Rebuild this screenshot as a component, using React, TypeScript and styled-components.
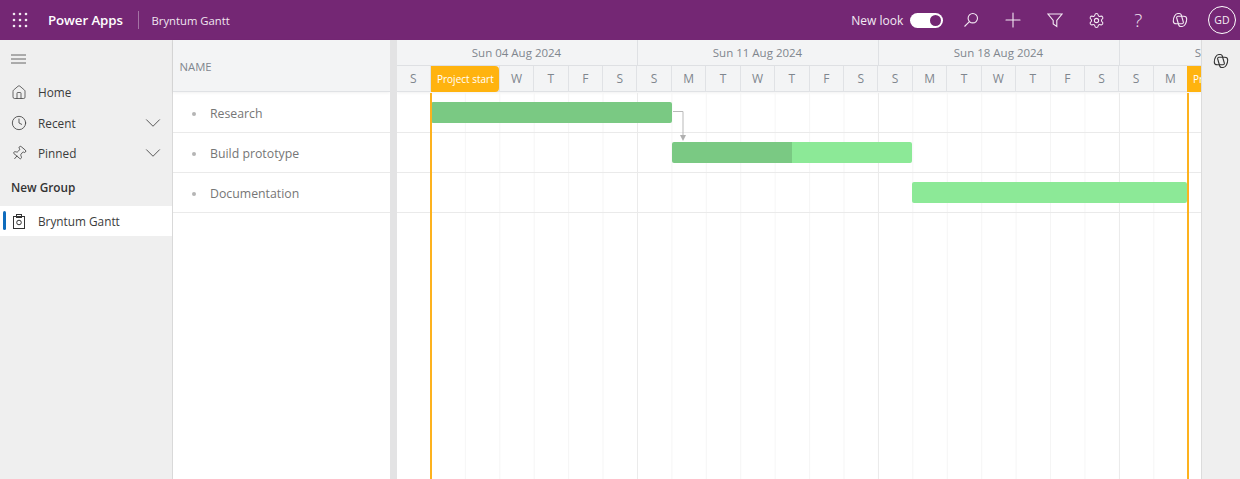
import React from "react";
import styled, { createGlobalStyle } from "styled-components";
import { Home, Clock, Pin, ChevronDown, Plus, Settings } from "lucide-react";

const Global = createGlobalStyle`
  html, body { margin: 0; padding: 0; height: 100%; background: #fff; overflow: hidden; }
  body { font-family: "Open Sans", "Noto Sans", sans-serif; }
  #root { height: 100%; }
`;

const DAY = 241 / 7;
const Page = styled.div`
  width: 1240px; height: 479px; display: flex; flex-direction: column; overflow: hidden;
`;
const TopBar = styled.header`
  height: 40px; flex: none; background: #742774; color: #fff; display: flex; align-items: center;
`;
const Waffle = styled.svg`
  width: 16px; height: 16px; margin-left: 12px; flex: none;
`;
const AppName = styled.span`
  margin-left: 20px; font-size: 13.3px; font-weight: 600; width: 89.500px; letter-spacing: -0.1px;
`;
const Divider = styled.span`
  width: 1px; height: 18px; background: rgba(255,255,255,.35);
`;
const EnvName = styled.span`
  margin-left: 13px; font-size: 11.300px; color: #f0e6f0;
`;
const TopRight = styled.div`
  margin-left: auto; display: flex; align-items: center; height: 100%;
`;
const LookLabel = styled.span`
  font-size: 12px; color: #f3eaf3; margin-right: 7px;
`;
const Toggle = styled.span`
  width: 33px; height: 15px; border-radius: 8px; background: #fff; display: flex; align-items: center;
  justify-content: flex-end; padding-right: 2px; box-sizing: border-box; margin-right: 7px;
`;
const Knob = styled.span`
  width: 11px; height: 11px; border-radius: 50%; background: #742774;
`;
const TopIcon = styled.span`
  width: 41.800px; height: 40px; display: flex; align-items: center; justify-content: center; flex: none;
`;
const Help = styled.span`
  font-size: 19px; font-weight: 300; color: #efe3ef; line-height: 1;
`;
const Avatar = styled.span`
  width: 26px; height: 26px; border: 1px solid #fff; border-radius: 50%; display: flex; align-items: center;
  justify-content: center; font-size: 10.500px; margin: 0 4px 0 7px; color: #f6eef6;
`;
const Main = styled.div`
  flex: 1; display: flex; min-height: 0;
`;
const Side = styled.nav`
  width: 172px; flex: none; background: #efefef; border-right: 1px solid #d9d9d9; padding-top: 9px; color: #333;
`;
const Burger = styled.div`
  height: 20px; padding-left: 11px; margin-bottom: 8px; display: flex; align-items: center; color: #666;
`;
const NavItem = styled.div`
  height: 30.500px; display: flex; align-items: center; padding-left: 11px; font-size: 11.800px; gap: 11px; color: #3b3b3b;
`;
const NavIcon = styled.span`
  width: 16px; height: 16px; display: flex; align-items: center; justify-content: center; color: #444; flex: none;
`;
const Chev = styled.span`
  margin-left: auto; margin-right: 6px; display: flex; color: #555;
`;
const GroupTitle = styled.div`
  font-size: 11.800px; font-weight: 600; color: #333; padding: 10.500px 0 0 11px; height: 27px;
`;
const ActiveItem = styled(NavItem)`
  background: #fff; height: 30px; position: relative; padding-left: 11px;
  &::before { content: ""; position: absolute; left: 3px; top: 5px; width: 3px; height: 19px; background: #0f6cbd; border-radius: 2px; }
`;
const Gantt = styled.section`
  flex: 1; display: flex; min-width: 0;
`;
const Locked = styled.div`
  width: 217px; flex: none; display: flex; flex-direction: column;
`;
const NameHead = styled.div`
  height: 52px; box-sizing: border-box; background: #f3f4f5; border-bottom: 1px solid #e0e2e5; display: flex; align-items: center;
  padding: 1px 0 0 6.500px; font-size: 11.300px; color: #7f868e; margin-bottom: 1px; box-shadow: 0 1px 3px rgba(0,0,0,.06);
`;
const TaskRow = styled.div`
  height: 40px; box-sizing: border-box; border-bottom: 1px solid #eaeaea; display: flex; align-items: center;
  padding: 2px 0 0 19px; font-size: 12.300px; color: #767676; gap: 14px;
`;
const Dot = styled.span`
  width: 4px; height: 4px; border-radius: 50%; background: #b5b5b5; flex: none;
`;
const Splitter = styled.div`
  width: 6.500px; flex: none; background: #e3e3e4;
`;
const Timeline = styled.div`
  width: 804.500px; flex: none; display: flex; flex-direction: column; position: relative; overflow: hidden;
`;
const HeadRow = styled.div`
  display: flex; flex: none; background: #f3f4f5; height: 26px; box-sizing: border-box; border-bottom: 1px solid #e0e2e5;
`;
const WeekCell = styled.div`
  width: ${DAY * 7}px; flex: none; box-sizing: border-box; border-right: 1px solid #dfe1e4; font-size: 11.500px; color: #7f868e;
  display: flex; align-items: center; justify-content: center; white-space: nowrap;
`;
const DayRow = styled(HeadRow)`
  box-shadow: 0 1px 3px rgba(0,0,0,.06); position: relative;
`;
const DayCell = styled.div`
  width: ${DAY}px; flex: none; box-sizing: border-box; border-right: 1px solid #e0e2e5; font-size: 12px; color: #7f868e;
  display: flex; align-items: center; justify-content: center;
`;
const Body = styled.div`
  flex: 1; position: relative; margin-top: 1px;
  background-image:
    linear-gradient(to right, transparent ${DAY * 7 - 1}px, #ebebeb ${DAY * 7 - 1}px),
    linear-gradient(to right, transparent ${DAY - 1}px, #f5f5f5 ${DAY - 1}px);
  background-size: ${DAY * 7}px 100%, ${DAY}px 100%;
`;
const TimeRow = styled.div`
  height: 40px; box-sizing: border-box; border-bottom: 1px solid #eaeaea; position: relative; display: flex; align-items: center;
`;
const Bar = styled.div<{ $left: number; $width: number; $done: number }>`
  position: absolute; left: ${p => p.$left}px; width: ${p => p.$width}px; top: 9px; height: 21px; border-radius: 2px;
  background: linear-gradient(to right, #7ac983 ${p => p.$done}%, #8ce997 ${p => p.$done}%);
`;
const Line = styled.div<{ $left: number }>`
  position: absolute; left: ${p => p.$left}px; top: 0; bottom: 0; width: 2px; background: #fdb21e; z-index: 2;
`;
const Marker = styled.div<{ $left: number }>`
  position: absolute; left: ${p => p.$left}px; top: 26px; height: 26px; width: 68px; background: #ffb30f; color: #fff; z-index: 3;
  border-radius: 0 4px 4px 0; font-size: 10px; display: flex; align-items: center; padding-left: 6px; box-sizing: border-box; white-space: nowrap;
`;
const Arrow = styled.svg`
  position: absolute; left: 275px; top: 18px; z-index: 1;
`;
const Rail = styled.aside`
  flex: 1; background: #efefef; border-left: 1px solid #dcdcdc; display: flex; justify-content: center; padding-top: 13px; box-sizing: border-box;
`;

const Copilot = ({ color, size = 16 }: { color: string; size?: number }) => (
  <svg width={size} height={size} viewBox="0 0 16 16" fill="none" stroke={color} strokeWidth="1.100">
    <path d="M5.800 1.500h1.600c1 0 1.600.5 1.900 1.500l2 7c.3 1-.3 1.700-1.300 1.700H4.200c-1.700 0-2.900-1-2.900-2.800 0-3.300 1.900-7.400 4.500-7.400Z" />
    <path d="M10.200 14.500H8.600c-1 0-1.600-.5-1.900-1.500l-2-7c-.3-1 .3-1.700 1.300-1.700h5.800c1.700 0 2.900 1 2.900 2.800 0 3.300-1.900 7.400-4.500 7.400Z" />
  </svg>
);

const DAYS = "SMTWTFS".repeat(4).split("").slice(0, 24).map((d, i) => ([1, 2, 23].includes(i) ? "" : d));
const WEEKS = ["Sun 04 Aug 2024", "Sun 11 Aug 2024", "Sun 18 Aug 2024", "Sun 25 Aug 2024"];
const TASKS = [
  { name: "Research", left: 34.500, width: 241, done: 100 },
  { name: "Build prototype", left: 275.500, width: 240, done: 50 },
  { name: "Documentation", left: 515.500, width: 275, done: 0 },
];

export default function App() {
  return (
    <Page>
      <Global />
      <TopBar>
        <Waffle viewBox="0 0 16 16" fill="#f3e9f3">
          {[2, 8, 14].flatMap(y => [2, 8, 14].map(x => <circle key={`${x}-${y}`} cx={x} cy={y} r="1.300" />))}
        </Waffle>
        <AppName>Power Apps</AppName>
        <Divider />
        <EnvName>Bryntum Gantt</EnvName>
        <TopRight>
          <LookLabel>New look</LookLabel>
          <Toggle><Knob /></Toggle>
          <TopIcon>
            <svg width="16" height="16" viewBox="0 0 16 16" fill="none" stroke="#f3e9f3" strokeWidth="1.100">
              <circle cx="9.800" cy="6.200" r="4.700" /><path d="M6.400 9.600 1.500 14.500" />
            </svg>
          </TopIcon>
          <TopIcon><Plus size={24} strokeWidth={1.100} color="#f3e9f3" /></TopIcon>
          <TopIcon>
            <svg width="16" height="16" viewBox="0 0 16 16" fill="none" stroke="#f3e9f3" strokeWidth="1.100">
              <path d="M1 2h14L9.800 8.500V14.500L6.200 12V8.500Z" />
            </svg>
          </TopIcon>
          <TopIcon><Settings size={17} strokeWidth={1.500} color="#f3e9f3" /></TopIcon>
          <TopIcon><Help>?</Help></TopIcon>
          <TopIcon><Copilot color="#f3e9f3" /></TopIcon>
          <Avatar>GD</Avatar>
        </TopRight>
      </TopBar>
      <Main>
        <Side>
          <Burger>
            <svg width="15" height="10" viewBox="0 0 15 10" stroke="#666" strokeWidth="1">
              <path d="M0 1h15M0 5h15M0 9h15" />
            </svg>
          </Burger>
          <NavItem><NavIcon><Home size={17} strokeWidth={1.200} /></NavIcon>Home</NavItem>
          <NavItem><NavIcon><Clock size={16} strokeWidth={1.300} /></NavIcon>Recent<Chev><ChevronDown size={26} strokeWidth={0.900} /></Chev></NavItem>
          <NavItem><NavIcon><Pin size={17} strokeWidth={1.200} style={{ transform: "rotate(40deg)" }} /></NavIcon>Pinned<Chev><ChevronDown size={26} strokeWidth={0.900} /></Chev></NavItem>
          <GroupTitle>New Group</GroupTitle>
          <ActiveItem>
            <NavIcon>
              <svg width="14" height="15" viewBox="0 0 14 15" fill="none" stroke="#333" strokeWidth="1">
                <rect x="1.500" y="2.500" width="11" height="12" /><rect x="4.500" y="0.500" width="5" height="3" /><circle cx="7" cy="8.500" r="2.300" />
              </svg>
            </NavIcon>
            Bryntum Gantt
          </ActiveItem>
        </Side>
        <Gantt>
          <Locked>
            <NameHead>NAME</NameHead>
            {TASKS.map(t => <TaskRow key={t.name}><Dot />{t.name}</TaskRow>)}
          </Locked>
          <Splitter />
          <Timeline>
            <HeadRow>{WEEKS.map(w => <WeekCell key={w}>{w}</WeekCell>)}</HeadRow>
            <DayRow>{DAYS.map((d, i) => <DayCell key={i}>{d}</DayCell>)}</DayRow>
            <Marker $left={34.500}>Project start</Marker>
            <Marker $left={790.500}>Project end</Marker>
            <Body>
              <Line $left={33.500} />
              <Line $left={790.500} />
              {TASKS.map(t => (
                <TimeRow key={t.name}><Bar $left={t.left} $width={t.width} $done={t.done} /></TimeRow>
              ))}
              <Arrow width="14" height="30" viewBox="0 0 14 30" fill="none">
                <path d="M1 .5H11V26" stroke="#b9b9b9" />
                <path d="M8 24h6l-3 6Z" fill="#b0b0b0" />
              </Arrow>
            </Body>
          </Timeline>
          <Rail><Copilot color="#333" /></Rail>
        </Gantt>
      </Main>
    </Page>
  );
}
